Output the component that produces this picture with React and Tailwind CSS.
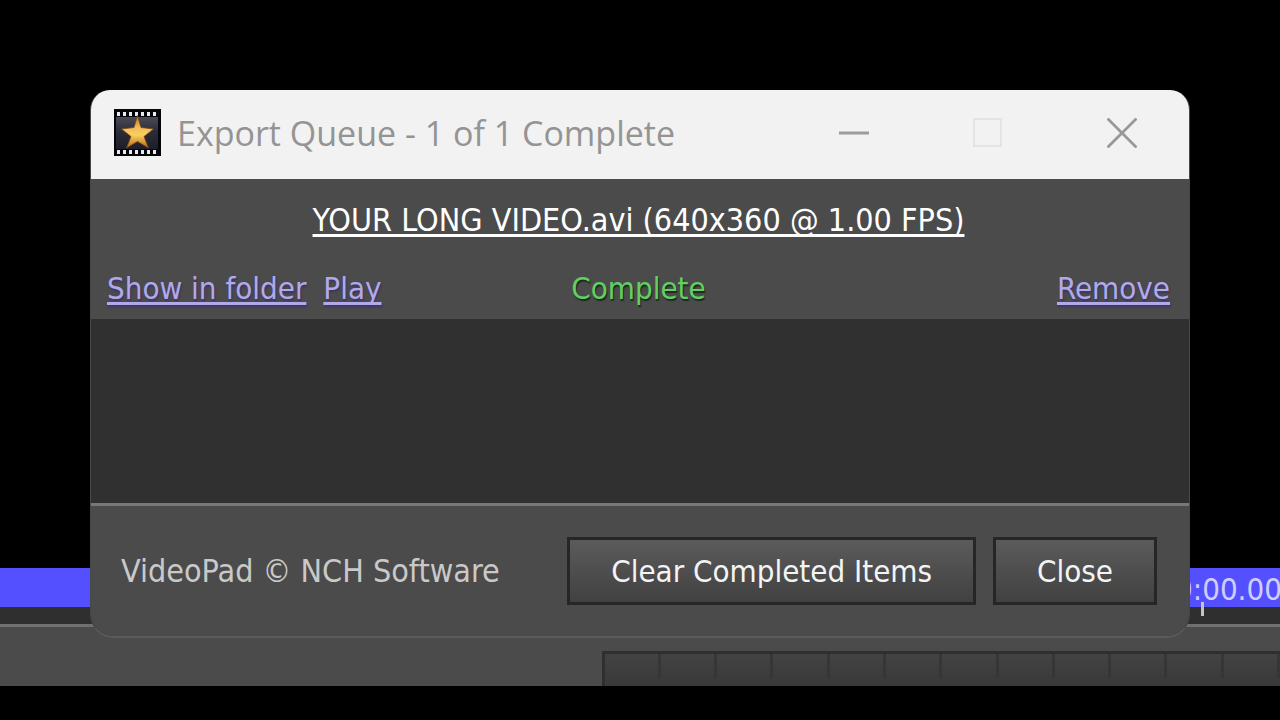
import { useState } from 'react';

const holes = [0, 1, 2, 3, 4, 5, 6];
const meterCells = Array.from({ length: 12 }, (_, i) => i);

const underlineClass = 'underline decoration-[3px] underline-offset-[3px] [text-decoration-skip-ink:none]';

const linkClass = `${underlineClass} text-[#b1a9ea] [text-shadow:1px_2px_2px_#3b3566]`;

const buttonClass =
  'h-[68px] border-[3px] border-[#262626] bg-linear-to-b from-[#5b5b5b] to-[#414141] px-[41px] whitespace-nowrap text-[#f4f4f4]';

const AppIcon = () => (
  <svg viewBox="0 0 47 47" className="size-[47px] shrink-0" aria-hidden="true">
    <defs>
      <linearGradient id="film" x1="0" y1="0" x2="0" y2="1">
        <stop offset="0" stopColor="#4a4b55" />
        <stop offset="0.45" stopColor="#2b2c38" />
        <stop offset="1" stopColor="#1d1e2a" />
      </linearGradient>
      <linearGradient id="star" x1="0" y1="0" x2="0" y2="1">
        <stop offset="0" stopColor="#b8732a" />
        <stop offset="0.35" stopColor="#f0b75a" />
        <stop offset="0.6" stopColor="#fbd25c" />
        <stop offset="1" stopColor="#b5651b" />
      </linearGradient>
    </defs>
    <rect width="47" height="47" fill="#05060c" />
    <rect x="2" y="8" width="42" height="32" fill="url(#film)" />
    {holes.map((i) => (
      <g key={i} fill="#e9e9ee">
        <rect x={3 + i * 6} y="3" width="3" height="4" />
        <rect x={3 + i * 6} y="41" width="3" height="4" />
      </g>
    ))}
    <path
      d="M23.500 6.500 L27 18.500 L39.500 20 L30 27.500 L34.500 39 L23.500 32.500 L12.500 39 L17 27.500 L7.500 20 L20 18.500 Z"
      fill="url(#star)"
      stroke="#7a4618"
      strokeWidth="0.800"
    />
  </svg>
);

const TitleBar = ({ onClose }) => (
  <header className="flex h-[89px] bg-[#f2f2f2] text-[#949494]">
    <div className="flex flex-1 items-center gap-4 pb-1 pl-[23px]">
      <AppIcon />
      <h1 className="font-['Open_Sans','Noto_Sans',sans-serif] text-[34px] leading-10 whitespace-nowrap">
        Export Queue - 1 of 1 Complete
      </h1>
    </div>
    <div className="flex pb-1">
      <button type="button" aria-label="Minimize" className="grid w-[134px] place-items-center">
        <svg viewBox="0 0 30 30" className="size-[30px]" fill="none" stroke="#9c9c9c" strokeWidth="3">
          <path d="M0 15h30" />
        </svg>
      </button>
      <button type="button" aria-label="Maximize" disabled className="grid w-[134px] place-items-center">
        <svg viewBox="0 0 30 30" className="size-[30px]" fill="none" stroke="#e4e4e4" strokeWidth="2">
          <rect x="1" y="1" width="27" height="27" />
        </svg>
      </button>
      <button type="button" aria-label="Close window" onClick={onClose} className="grid w-[134px] place-items-center">
        <svg viewBox="0 0 30 30" className="size-[30px]" fill="none" stroke="#989898" strokeWidth="2.800">
          <path d="M0.500 0.500l29 29M29.500 0.500l-29 29" />
        </svg>
      </button>
    </div>
  </header>
);

const QueueItem = ({ item }) => (
  <div className="bg-[#4b4b4b] pt-[23px] pr-[19px] pb-[13px] pl-4">
    <h2 className={`${underlineClass} text-center text-[32px] text-white`}>{item.name}</h2>
    <div className="mt-8 grid grid-cols-[1fr_auto_1fr]">
      <div className="flex gap-[17px]">
        <a href="#folder" className={linkClass}>Show in folder</a>
        <a href="#play" className={linkClass}>Play</a>
      </div>
      <span className="text-[#62cf62] [text-shadow:1px_2px_1px_#1f2a1f]">{item.status}</span>
      <a href="#remove" className={`${linkClass} justify-self-end`}>Remove</a>
    </div>
  </div>
);

/* Main window behind the dialog: timeline ruler and level meter */
const Editor = () => (
  <div className="col-start-1 row-start-1 flex min-h-screen flex-col overflow-hidden">
    <div className="flex-1" />
    <div className="flex h-[39px] justify-end bg-[#5450ff] text-[#cfceff]">
      <div className="z-10 w-[105px]">
        <div className="h-[34px] pt-[3px] leading-9 whitespace-nowrap">0:00.00</div>
        <div className="ml-[26px] h-[14px] w-[3px] bg-[#c4c4c4]" />
      </div>
    </div>
    <div className="h-[17px] bg-[#2f2f2f]" />
    <div className="flex h-[62px] justify-end border-t-[3px] border-[#707070] bg-[#4b4b4b] pt-6">
      <div className="flex w-[53%] border-t-[3px] border-l-[3px] border-[#2f2f2f] bg-linear-to-b from-[#434343] to-[#393939]">
        {meterCells.map((i) => (
          <div key={i} className="mb-2 flex-1 border-r-[3px] border-[#363636]" />
        ))}
      </div>
    </div>
    <div className="h-[34px]" />
  </div>
);

const App = () => {
  const [open, setOpen] = useState(true);
  const [items, setItems] = useState([
    { name: 'YOUR LONG VIDEO.avi (640x360 @ 1.00 FPS)', status: 'Complete' },
  ]);

  return (
    <main className="grid min-h-screen grid-cols-1 overflow-hidden bg-black font-['DejaVu_Sans_Condensed','Noto_Sans',sans-serif] text-[31px] leading-9">
      <Editor />

      {open && (
        <section
          role="dialog"
          aria-label="Export Queue"
          className="z-20 col-start-1 row-start-1 mx-auto mt-[90px] mb-[82px] flex w-full max-w-[1100px] flex-col overflow-hidden rounded-t-[20px] rounded-b-3xl border-x border-b-2 border-x-[#484848] border-b-[#5a5a5a] bg-[#303030]"
        >
          <TitleBar onClose={() => setOpen(false)} />
          <div className="flex-1">
            {items.map((item) => (
              <QueueItem key={item.name} item={item} />
            ))}
          </div>
          <footer className="flex h-[133px] items-center gap-[17px] border-t-[3px] border-[#787878] bg-[#4b4b4b] pr-8 pl-[30px]">
            <p className="flex-1 text-[32px] whitespace-nowrap text-[#c9c9c9]">VideoPad © NCH Software</p>
            <button type="button" className={buttonClass} onClick={() => setItems([])}>
              Clear Completed Items
            </button>
            <button type="button" className={buttonClass} onClick={() => setOpen(false)}>
              Close
            </button>
          </footer>
        </section>
      )}
    </main>
  );
};

export default App;
